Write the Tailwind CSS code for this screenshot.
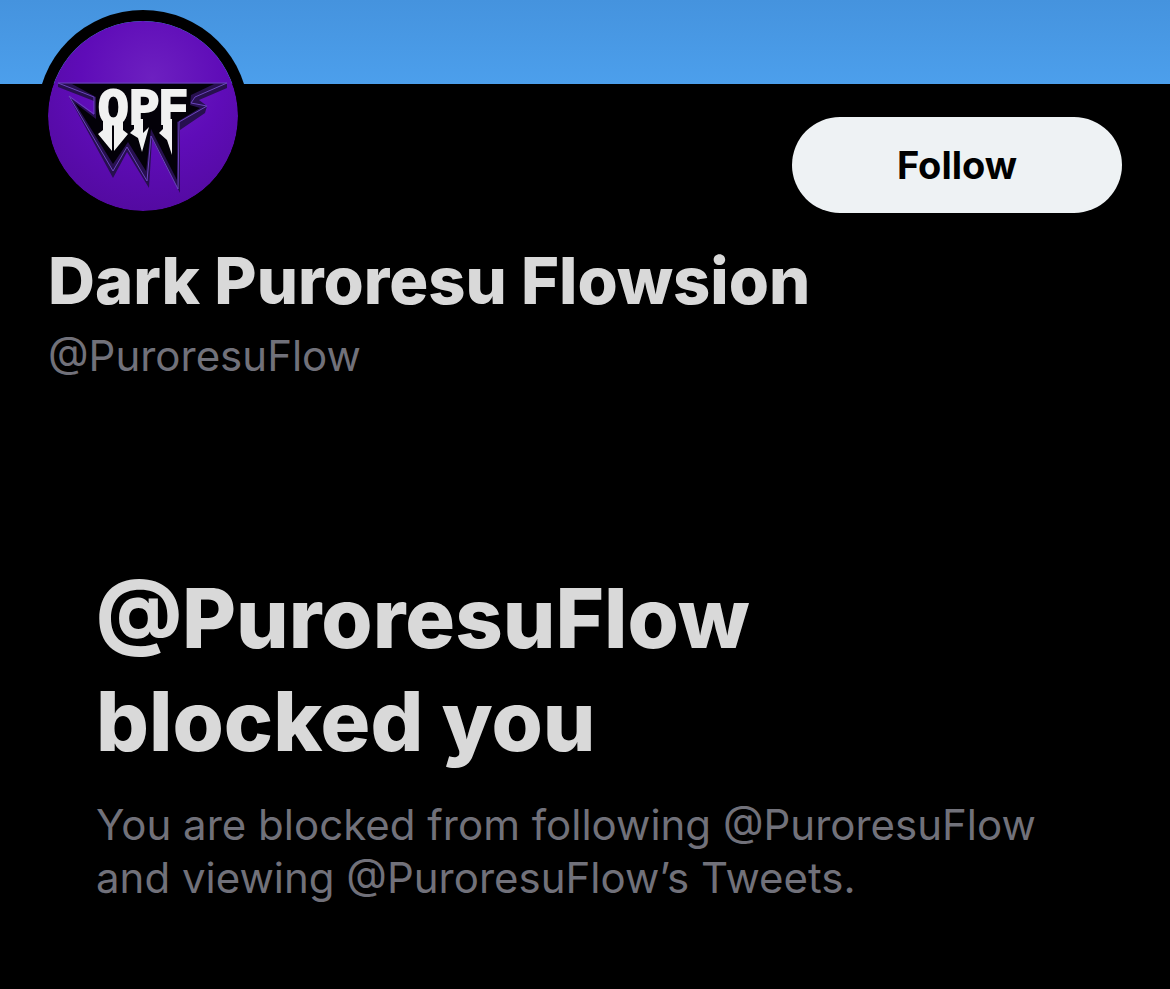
<!DOCTYPE html>
<html lang="en">
<head>
  <meta charset="UTF-8" />
  <meta name="viewport" content="width=device-width, initial-scale=1" />
  <title>Dark Puroresu Flowsion (@PuroresuFlow)</title>
  <script src="https://cdn.jsdelivr.net/npm/@tailwindcss/browser@4"></script>
</head>
<body class="min-h-screen bg-black font-['Inter',sans-serif] text-[#d9d9d9]">

<!-- Banner -->
<div class="h-21 bg-linear-to-b from-[#4593de] to-[#4c9fec]"></div>

<main class="px-12">
  <!-- Avatar and follow button -->
  <div class="flex items-start justify-between">
    <div class="-mt-[63px] size-[190px] rounded-full ring-[11px] ring-black">
      <svg viewBox="0 0 190 190" class="size-full rounded-full" role="img" aria-label="OPF logo">
        <defs>
          <radialGradient id="glow" cx="0.55" cy="0.3" r="0.75">
            <stop offset="0" stop-color="#6d20c0" />
            <stop offset="0.5" stop-color="#5f0cb8" />
            <stop offset="1" stop-color="#520a9e" />
          </radialGradient>
        </defs>
        <circle cx="95" cy="95" r="95" fill="url(#glow)" />
        <!-- Outer bevel -->
        <path d="M10 62H179V67L151 79L159 85L157 92L132 109V172L104 118L101 167L79 131L65 157L21 76L46 94V80L10 66Z" fill="#27104f" />
        <!-- Black plate -->
        <path d="M24 63H166L143 74L142 84L152 87L129 101V159L103 108L98 150L80 121L65 143L27 82L48 98V76Z" fill="#030108" />
        <path d="M10 62H179L147 76L143 82L159 85L131 101L130 168L103 115L99 160L79 126L65 150L21 75L46 93V76Z" fill="none" stroke="#6a45bd" stroke-width="1" />
        <!-- Letters and the blades under them -->
        <g fill="#f1f1f1">
          <path d="M55 98H64V130L50 113L55 109Z" />
          <path d="M66 98H75V109L80 113L66 130Z" />
          <path d="M86 98H95V112L101 106L94 131L90 117L82 112L86 108Z" />
          <path d="M115 98H124V134L119 119L111 112L115 108Z" />
          <text y="103" x="50 81 110" font-family="Liberation Mono" font-size="51" font-weight="700" stroke="#f1f1f1" stroke-width="2">OPF</text>
        </g>
      </svg>
    </div>
    <button type="button" class="mt-[33px] h-24 w-[330px] rounded-full bg-[#eef2f4] text-[38px] font-bold text-black">Follow</button>
  </div>

  <!-- Name and handle -->
  <h1 class="mt-7 text-[65px] leading-20 font-extrabold">Dark Puroresu Flowsion</h1>
  <p class="mt-2 text-[42px] leading-[53px] text-[#71717a]">@PuroresuFlow</p>

  <!-- Blocked notice -->
  <section class="mt-[185px] px-12">
    <h2 class="max-w-[800px] text-[83px] leading-[103px] font-extrabold">@PuroresuFlow<br />blocked you</h2>
    <p class="mt-[25px] text-[42px] leading-[53px] text-[#71717a]">You are blocked from following @PuroresuFlow and viewing @PuroresuFlow’s Tweets.</p>
  </section>
</main>

</body>
</html>
